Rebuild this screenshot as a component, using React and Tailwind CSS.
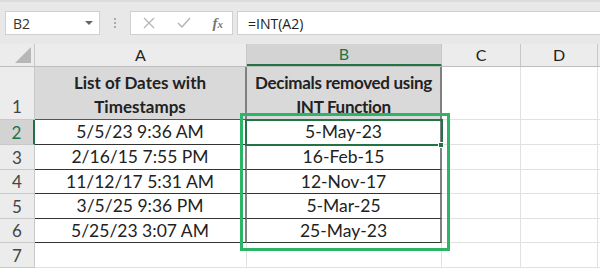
import React from 'react';

const rows = [
    { n: 2, a: '5/5/23 9:36 AM', b: '5-May-23', h: 25 },
    { n: 3, a: '2/16/15 7:55 PM', b: '16-Feb-15', h: 25 },
    { n: 4, a: '11/12/17 5:31 AM', b: '12-Nov-17', h: 24 },
    { n: 5, a: '3/5/25 9:36 PM', b: '5-Mar-25', h: 25 },
    { n: 6, a: '5/25/23 3:07 AM', b: '25-May-23', h: 24 },
];

const cellFont = { fontFamily: 'Lato, "Liberation Sans", sans-serif' };

const App = () => {
    return (
        <div
            className="relative w-[600px] h-[269px] overflow-hidden bg-white text-[#222]"
            style={cellFont}
        >
            {/* formula bar */}
            <div className="h-[44px] bg-[#e8e8e8] border-t-2 border-[#dcdcdc] flex items-center pl-[5px]">
                <div className="w-[95px] h-[24px] bg-white border border-[#d0d0d0] flex items-center justify-between pl-[7px] pr-[6px] text-[14px] font-['Open_Sans',sans-serif] text-[#333]">
                    <span>B2</span>
                    <span className="w-0 h-0 border-l-[4px] border-r-[4px] border-t-[4px] border-l-transparent border-r-transparent border-t-[#666]"></span>
                </div>
                <div className="w-[30px] flex flex-col items-center gap-[2px]">
                    <span className="w-[2px] h-[2px] bg-[#aaa]"></span>
                    <span className="w-[2px] h-[2px] bg-[#aaa]"></span>
                    <span className="w-[2px] h-[2px] bg-[#aaa]"></span>
                </div>
                <div className="w-[103px] h-[24px] bg-white border border-[#d0d0d0] flex items-center justify-between pl-[12px] pr-[9px]">
                    <svg width="12" height="12" viewBox="0 0 12 12">
                        <path d="M1 1 L11 11 M11 1 L1 11" stroke="#b5b5b5" strokeWidth="1.3" fill="none" />
                    </svg>
                    <svg width="14" height="12" viewBox="0 0 14 12">
                        <path d="M1 6 L5 10 L13 1" stroke="#b5b5b5" strokeWidth="1.5" fill="none" />
                    </svg>
                    <span className="text-[15px] italic font-bold text-[#777] font-['Liberation_Serif',serif] leading-none">
                        f<span className="text-[11px]">x</span>
                    </span>
                </div>
                <div className="ml-[4px] flex-1 h-[24px] bg-white border border-[#d0d0d0] border-r-0 flex items-center pl-[10px] text-[14px] font-['Open_Sans',sans-serif] text-[#222]">
                    =INT(A2)
                </div>
            </div>

            {/* column headers */}
            <div className="flex h-[23px] bg-[#ececec] border-b border-[#bdbdbd] text-[16px] text-[#222]">
                <div className="w-[35px] border-r border-[#c8c8c8] relative">
                    <svg className="absolute right-[3px] bottom-[3px]" width="16" height="16" viewBox="0 0 16 16">
                        <path d="M16 0 L16 16 L0 16 Z" fill="#b7b7b7" />
                    </svg>
                </div>
                <div className="w-[212px] border-r border-[#c8c8c8] flex items-center justify-center">A</div>
                <div className="w-[195px] border-r border-[#c8c8c8] bg-[#d3d3d3] border-b-2 border-b-[#217346] flex items-center justify-center text-[#217346]">B</div>
                <div className="w-[79px] border-r border-[#c8c8c8] flex items-center justify-center">C</div>
                <div className="w-[77px] border-r border-[#c8c8c8] flex items-center justify-center">D</div>
                <div className="flex-1"></div>
            </div>

            {/* row 1 */}
            <div className="flex h-[53px] text-[17px]">
                <div className="w-[35px] bg-[#ececec] border-r border-b border-[#c8c8c8] flex items-end justify-center text-[17px] text-[#444]">1</div>
                <div className="w-[212px] bg-[#d9d9d9] border-b border-[#555] border-r-2 border-r-[#808080] flex flex-col items-center justify-end font-bold leading-[24px] whitespace-nowrap">
                    <span>List of Dates with</span>
                    <span>Timestamps</span>
                </div>
                <div className="w-[195px] bg-[#d9d9d9] border-b border-[#555] border-r-2 border-r-[#808080] flex flex-col items-center justify-end font-bold leading-[24px] whitespace-nowrap tracking-[-0.3px]">
                    <span>Decimals removed using</span>
                    <span>INT Function</span>
                </div>
                <div className="w-[79px] border-r border-b border-[#e1e1e1]"></div>
                <div className="w-[77px] border-r border-b border-[#e1e1e1]"></div>
                <div className="flex-1 border-b border-[#e1e1e1]"></div>
            </div>

            {/* data rows */}
            {rows.map((r) => (
                <div key={r.n} className="flex text-[17.5px]" style={{ height: r.h }}>
                    <div
                        className={
                            r.n === 2
                                ? 'w-[35px] bg-[#d3d3d3] border-b border-[#c8c8c8] border-r-2 border-r-[#217346] flex items-center justify-center pt-[1px] text-[17px] text-[#217346]'
                                : 'w-[35px] bg-[#ececec] border-r border-b border-[#c8c8c8] flex items-center justify-center pt-[1px] text-[17px] text-[#444]'
                        }
                    >
                        {r.n}
                    </div>
                    <div className="w-[212px] border-b border-[#333] border-r-2 border-r-[#808080] flex items-center justify-center pt-[1px]">{r.a}</div>
                    <div className="w-[195px] border-b border-[#333] border-r-2 border-r-[#808080] flex items-center justify-center pt-[1px]">{r.b}</div>
                    <div className="w-[79px] border-r border-b border-[#e1e1e1]"></div>
                    <div className="w-[77px] border-r border-b border-[#e1e1e1]"></div>
                    <div className="flex-1 border-b border-[#e1e1e1]"></div>
                </div>
            ))}

            {/* row 7 */}
            <div className="flex h-[25px]">
                <div className="w-[35px] bg-[#ececec] border-r border-b border-[#c8c8c8] flex items-center justify-center pt-[1px] text-[17px] text-[#444]">7</div>
                <div className="w-[212px] border-r border-b border-[#e1e1e1]"></div>
                <div className="w-[195px] border-r border-b border-[#e1e1e1]"></div>
                <div className="w-[79px] border-r border-b border-[#e1e1e1]"></div>
                <div className="w-[77px] border-r border-b border-[#e1e1e1]"></div>
                <div className="flex-1 border-b border-[#e1e1e1]"></div>
            </div>

            {/* active cell B2 */}
            <div className="absolute left-[245px] top-[119px] w-[198px] h-[27px] border-2 border-[#217346]"></div>
            <div className="absolute left-[438px] top-[142px] w-[6px] h-[6px] bg-[#217346] border border-white"></div>

            {/* green annotation box */}
            <div className="absolute left-[240px] top-[113px] w-[210px] h-[138px] border-[3px] border-[#2db567]"></div>
        </div>
    );
};

export default App;
